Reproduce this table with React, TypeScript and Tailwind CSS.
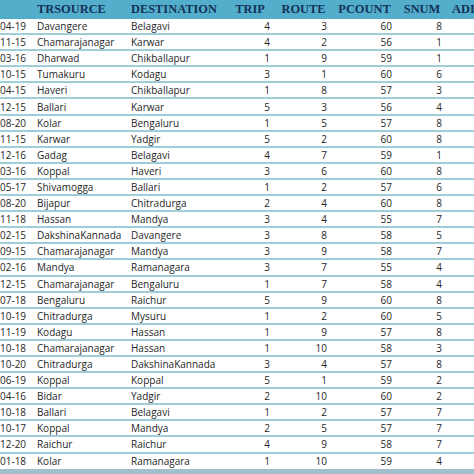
import React from "react";

type Row = [string, string, string, number, number, number, number];

const rows: Row[] = [
  ["04-19", "Davangere", "Belagavi", 4, 3, 60, 8],
  ["11-15", "Chamarajanagar", "Karwar", 4, 2, 56, 1],
  ["03-16", "Dharwad", "Chikballapur", 1, 9, 59, 1],
  ["10-15", "Tumakuru", "Kodagu", 3, 1, 60, 6],
  ["04-15", "Haveri", "Chikballapur", 1, 8, 57, 3],
  ["12-15", "Ballari", "Karwar", 5, 3, 56, 4],
  ["08-20", "Kolar", "Bengaluru", 1, 5, 57, 8],
  ["11-15", "Karwar", "Yadgir", 5, 2, 60, 8],
  ["12-16", "Gadag", "Belagavi", 4, 7, 59, 1],
  ["03-16", "Koppal", "Haveri", 3, 6, 60, 8],
  ["05-17", "Shivamogga", "Ballari", 1, 2, 57, 6],
  ["08-20", "Bijapur", "Chitradurga", 2, 4, 60, 8],
  ["11-18", "Hassan", "Mandya", 3, 4, 55, 7],
  ["02-15", "DakshinaKannada", "Davangere", 3, 8, 58, 5],
  ["09-15", "Chamarajanagar", "Mandya", 3, 9, 58, 7],
  ["02-16", "Mandya", "Ramanagara", 3, 7, 55, 4],
  ["12-15", "Chamarajanagar", "Bengaluru", 1, 7, 58, 4],
  ["07-18", "Bengaluru", "Raichur", 5, 9, 60, 8],
  ["10-19", "Chitradurga", "Mysuru", 1, 2, 60, 5],
  ["11-19", "Kodagu", "Hassan", 1, 9, 57, 8],
  ["10-18", "Chamarajanagar", "Hassan", 1, 10, 58, 3],
  ["10-20", "Chitradurga", "DakshinaKannada", 3, 4, 57, 8],
  ["06-19", "Koppal", "Koppal", 5, 1, 59, 2],
  ["04-16", "Bidar", "Yadgir", 2, 10, 60, 2],
  ["10-18", "Ballari", "Belagavi", 1, 2, 57, 7],
  ["10-17", "Koppal", "Mandya", 2, 5, 57, 7],
  ["12-20", "Raichur", "Raichur", 4, 9, 58, 7],
  ["01-18", "Kolar", "Ramanagara", 1, 10, 59, 4],
];

const cols = "grid grid-cols-[33px_94px_98px_50px_57px_65px_50px_1fr]";

export default function App() {
  return (
    <div className="w-[474px] h-[474px] overflow-hidden bg-white">
      <div
        className={`${cols} h-[19px] items-center bg-[#52aeca] text-[#14325a] font-bold text-[12.4px] leading-none whitespace-nowrap`}
        style={{ fontFamily: '"Liberation Serif", serif' }}
      >
        <div />
        <div className="pl-[4px]">TRSOURCE</div>
        <div className="pl-[4px]">DESTINATION</div>
        <div className="text-center">TRIP</div>
        <div className="text-center">ROUTE</div>
        <div className="text-center">PCOUNT</div>
        <div className="text-center">SNUM</div>
        <div className="pl-[5px]">ADI</div>
      </div>
      <div
        className="text-[10px] text-[#262626]"
        style={{ fontFamily: '"Open Sans", sans-serif' }}
      >
        {rows.map((r, i) => {
          const last = i === rows.length - 1;
          return (
            <div
              key={i}
              className={`${cols} items-center whitespace-nowrap leading-none ${
                last ? "h-[15px]" : "h-[16.1px] border-b-2 border-[#9fcdda]"
              }`}
            >
              <div className="text-right pr-[7px]">{r[0]}</div>
              <div className="pl-[4px]">{r[1]}</div>
              <div className="pl-[4px]">{r[2]}</div>
              <div className="text-right pr-[5px]">{r[3]}</div>
              <div className="text-right pr-[5px]">{r[4]}</div>
              <div className="text-right pr-[5px]">{r[5]}</div>
              <div className="text-right pr-[5px]">{r[6]}</div>
              <div />
            </div>
          );
        })}
      </div>
      <div className="h-[8px] bg-[#a2bfcc]" />
    </div>
  );
}
